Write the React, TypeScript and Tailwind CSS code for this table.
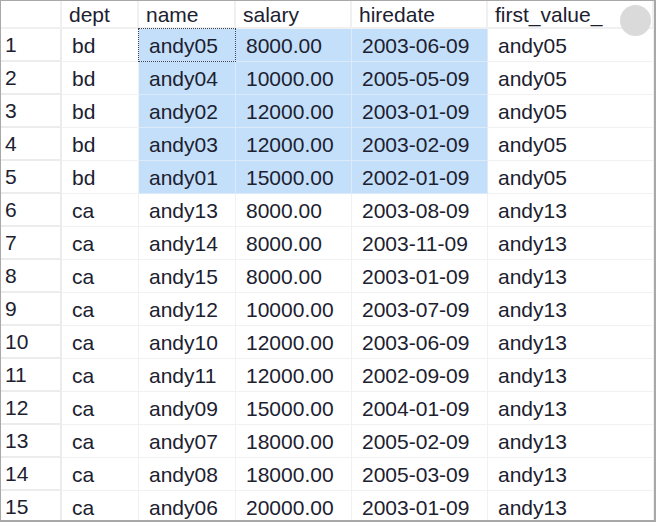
const rows: [string, string, string, string, string][] = [
  ["bd", "andy05", "8000.00", "2003-06-09", "andy05"],
  ["bd", "andy04", "10000.00", "2005-05-09", "andy05"],
  ["bd", "andy02", "12000.00", "2003-01-09", "andy05"],
  ["bd", "andy03", "12000.00", "2003-02-09", "andy05"],
  ["bd", "andy01", "15000.00", "2002-01-09", "andy05"],
  ["ca", "andy13", "8000.00", "2003-08-09", "andy13"],
  ["ca", "andy14", "8000.00", "2003-11-09", "andy13"],
  ["ca", "andy15", "8000.00", "2003-01-09", "andy13"],
  ["ca", "andy12", "10000.00", "2003-07-09", "andy13"],
  ["ca", "andy10", "12000.00", "2003-06-09", "andy13"],
  ["ca", "andy11", "12000.00", "2002-09-09", "andy13"],
  ["ca", "andy09", "15000.00", "2004-01-09", "andy13"],
  ["ca", "andy07", "18000.00", "2005-02-09", "andy13"],
  ["ca", "andy08", "18000.00", "2005-03-09", "andy13"],
  ["ca", "andy06", "20000.00", "2003-01-09", "andy13"],
];

const cols = "grid grid-cols-[61px_77px_97px_116px_136px_1fr]";

export default function App() {
  return (
    <div className="relative h-[522px] w-[656px] overflow-hidden border border-r-2 border-b-2 border-[#a8a8a8] bg-white font-['Liberation_Sans',Arial,sans-serif] text-[21px] text-[#1c2130]">
      <div className={`${cols} h-[28px]`}>
        <div className="border-r-2 border-b-2 border-[#f0f0f0]" />
        {["dept", "name", "salary", "hiredate", "first_value_"].map((h) => (
          <div key={h} className="flex items-center border-r-2 border-b-2 border-[#f0f0f0] pl-[7px] leading-none">
            {h}
          </div>
        ))}
      </div>
      {rows.map((r, i) => {
        const sel = i < 5;
        return (
          <div key={i} className={`${cols} h-[33px]`}>
            <div className="flex items-center border-r-2 border-b-2 border-[#ececec] pl-[4px] leading-none">{i + 1}</div>
            {r.map((v, j) => {
              const hi = sel && j >= 1 && j <= 3;
              const focus = i === 0 && j === 1;
              return (
                <div
                  key={j}
                  className={`relative flex items-center border-r border-b pl-[10px] leading-none ${
                    hi ? "bg-[#c4dffa] border-[#dcebfb]" : "border-[#f1f1f1]"
                  }`}
                >
                  {focus && <div className="absolute inset-[-1px] border border-dotted border-[#3a3f55]" />}
                  {v}
                </div>
              );
            })}
          </div>
        );
      })}
      <div className="absolute left-[619px] top-[4px] h-[31px] w-[31px] rounded-full bg-[#dadada]" />
    </div>
  );
}
